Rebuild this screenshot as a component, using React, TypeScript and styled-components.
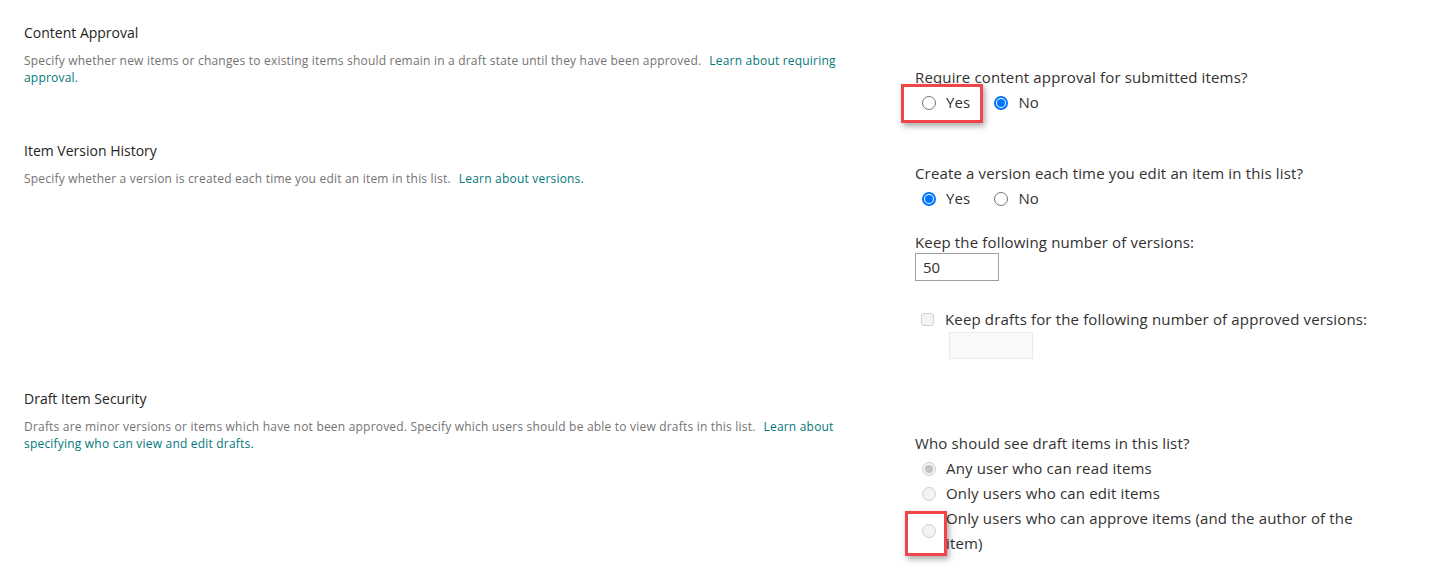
import React from "react";
import styled, { createGlobalStyle } from "styled-components";

const GlobalStyle = createGlobalStyle`
  html, body { margin: 0; padding: 0; background: #ffffff; }
  body { font-family: "Segoe UI", "Open Sans", "Noto Sans", sans-serif; color: #333333; }
`;

const Page = styled.div`
  padding: 24px 0 0 24px;
  width: 1446px;
  box-sizing: border-box;
`;

const Section = styled.section<{ $minHeight: number }>`
  display: grid;
  grid-template-columns: 830px 470px;
  column-gap: 61px;
  min-height: ${(p) => p.$minHeight}px;
`;

const Left = styled.div`
  display: flex;
  flex-direction: column;
`;

const Title = styled.h2`
  margin: 0;
  font-size: 14px;
  line-height: 18px;
  font-weight: 400;
  color: #252423;
`;

const Description = styled.p`
  margin: 10px 0 0;
  font-size: 12px;
  line-height: 17px;
  color: #737373;
  letter-spacing: 0.2px;
`;

const Link = styled.a`
  color: #03787c;
  text-decoration: none;
  margin-left: 8px;
`;

const Right = styled.div<{ $top: number }>`
  padding-top: ${(p) => p.$top}px;
  display: flex;
  flex-direction: column;
`;

const Label = styled.div<{ $gap?: number }>`
  font-size: 15px;
  line-height: 20px;
  color: #323130;
  margin-top: ${(p) => p.$gap ?? 0}px;
  letter-spacing: 0.15px;
`;

const RadioRow = styled.div`
  display: flex;
  align-items: center;
  gap: 24px;
  margin-top: 3px;
  padding-left: 7px;
`;

const RadioList = styled.div`
  display: flex;
  flex-direction: column;
  margin-top: 3px;
  padding-left: 7px;
`;

const Option = styled.label`
  position: relative;
  display: flex;
  align-items: center;
  gap: 10px;
  min-height: 25px;
  font-size: 15px;
  line-height: 25px;
  color: #323130;
  letter-spacing: 0.15px;
`;

const OptionText = styled.span`
  flex: 1;
`;

const Circle = styled.span<{ $checked?: boolean; $disabled?: boolean }>`
  position: relative;
  flex: none;
  width: 14px;
  height: 14px;
  box-sizing: border-box;
  border-radius: 50%;
  border: ${(p) => (p.$checked && !p.$disabled ? 2 : 1)}px solid
    ${(p) => (p.$disabled ? "#cfcfcf" : p.$checked ? "#0075ff" : "#767676")};
  background: ${(p) => (p.$disabled ? "#f3f3f3" : "#ffffff")};
  &::after {
    content: "";
    display: ${(p) => (p.$checked ? "block" : "none")};
    position: absolute;
    left: ${(p) => (p.$checked && !p.$disabled ? 1 : 2)}px;
    top: ${(p) => (p.$checked && !p.$disabled ? 1 : 2)}px;
    width: 8px;
    height: 8px;
    border-radius: 50%;
    background: ${(p) => (p.$disabled ? "#c2c2c2" : "#0075ff")};
  }
`;

const Highlight = styled.span<{ $l: number; $t: number; $w: number; $h: number }>`
  position: absolute;
  left: ${(p) => p.$l}px;
  top: ${(p) => p.$t}px;
  width: ${(p) => p.$w}px;
  height: ${(p) => p.$h}px;
  box-sizing: border-box;
  border: 3px solid #f0464a;
  box-shadow: 2px 3px 6px rgba(0, 0, 0, 0.35);
  pointer-events: none;
`;

const NumberBox = styled.div<{ $disabled?: boolean }>`
  width: 84px;
  height: ${(p) => (p.$disabled ? 27 : 28)}px;
  box-sizing: border-box;
  border: 1px solid ${(p) => (p.$disabled ? "#ebe9e8" : "#a0a0a0")};
  background: ${(p) => (p.$disabled ? "#faf9f8" : "#ffffff")};
  padding: 0 7px;
  font-size: 15px;
  line-height: 26px;
  color: #323130;
  margin-top: 1px;
`;

const CheckRow = styled.div`
  display: flex;
  align-items: center;
  gap: 11px;
  margin-top: 28px;
  padding-left: 6px;
  font-size: 15px;
  line-height: 20px;
  color: #323130;
  letter-spacing: 0.15px;
`;

const CheckBox = styled.span`
  width: 13px;
  height: 13px;
  box-sizing: border-box;
  border: 1px solid #d2d2d2;
  border-radius: 3px;
  background: #f4f4f4;
  flex: none;
`;

const Indent = styled.div`
  padding-left: 34px;
  margin-top: 2px;
`;

export default function App() {
  return (
    <>
      <GlobalStyle />
      <Page>
        <Section $minHeight={118}>
          <Left>
            <Title>Content Approval</Title>
            <Description>
              Specify whether new items or changes to existing items should remain in a draft state until they have been approved.
              <Link href="#">Learn about requiring approval.</Link>
            </Description>
          </Left>
          <Right $top={43}>
            <Label>Require content approval for submitted items?</Label>
            <RadioRow>
              <Option>
                <Highlight $l={-21} $t={-6} $w={82} $h={39} />
                <Circle />
                <OptionText>Yes</OptionText>
              </Option>
              <Option>
                <Circle $checked />
                <OptionText>No</OptionText>
              </Option>
            </RadioRow>
          </Right>
        </Section>

        <Section $minHeight={248}>
          <Left>
            <Title>Item Version History</Title>
            <Description>
              Specify whether a version is created each time you edit an item in this list.
              <Link href="#">Learn about versions.</Link>
            </Description>
          </Left>
          <Right $top={21}>
            <Label>Create a version each time you edit an item in this list?</Label>
            <RadioRow>
              <Option>
                <Circle $checked />
                <OptionText>Yes</OptionText>
              </Option>
              <Option>
                <Circle />
                <OptionText>No</OptionText>
              </Option>
            </RadioRow>
            <Label $gap={21}>Keep the following number of versions:</Label>
            <NumberBox>50</NumberBox>
            <CheckRow>
              <CheckBox />
              <span>Keep drafts for the following number of approved versions:</span>
            </CheckRow>
            <Indent>
              <NumberBox $disabled />
            </Indent>
          </Right>
        </Section>

        <Section $minHeight={180}>
          <Left>
            <Title>Draft Item Security</Title>
            <Description>
              Drafts are minor versions or items which have not been approved. Specify which users should be able to view drafts in this list.
              <Link href="#">Learn about specifying who can view and edit drafts.</Link>
            </Description>
          </Left>
          <Right $top={43}>
            <Label>Who should see draft items in this list?</Label>
            <RadioList>
              <Option>
                <Circle $checked $disabled />
                <OptionText>Any user who can read items</OptionText>
              </Option>
              <Option>
                <Circle $disabled />
                <OptionText>Only users who can edit items</OptionText>
              </Option>
              <Option>
                <Highlight $l={-17} $t={5} $w={42} $h={45} />
                <Circle $disabled />
                <OptionText>Only users who can approve items (and the author of the item)</OptionText>
              </Option>
            </RadioList>
          </Right>
        </Section>
      </Page>
    </>
  );
}
